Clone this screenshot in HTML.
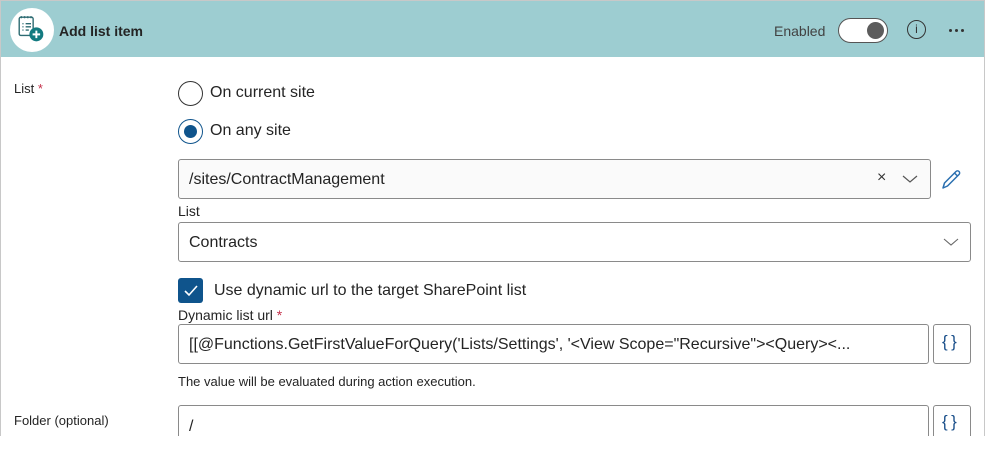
<!DOCTYPE html>
<html><head><style>
*{box-sizing:border-box;margin:0;padding:0}
body{width:987px;height:451px;background:#fff;font-family:"Liberation Sans",sans-serif;color:#242424;position:relative;overflow:hidden}
.card{position:absolute;left:0;top:0;width:985px;height:436px;border-left:1px solid #c8c8c8;border-right:1px solid #c8c8c8;border-top:1px solid #c8c8c8;overflow:hidden}
.hdr{position:absolute;left:0;top:0;width:100%;height:56px;background:#9dcdd1}
.abs{position:absolute}
.box{position:absolute;border:1px solid #8a8a8a;border-radius:3px;background:#fff}
.lbl{font-size:13px}
</style></head><body>
<div class="card">
<div class="hdr">
 <div class="abs" style="left:9px;top:7px;width:44px;height:44px;border-radius:50%;background:#fff"></div>
 <svg class="abs" style="left:15px;top:13px" width="30" height="30" viewBox="0 0 28 28">
  <rect x="3" y="3" width="13" height="17" rx="1.5" fill="none" stroke="#2d6b72" stroke-width="1.3"/>
  <path d="M5 2v2M8 2v2M11 2v2M14 2v2" stroke="#2d6b72" stroke-width="1.2"/>
  <path d="M6 9h1M9 9h5M6 12h1M9 12h5M6 15h1M9 15h3" stroke="#2d6b72" stroke-width="1.3"/>
  <circle cx="19" cy="19" r="6.5" fill="#137a80"/>
  <path d="M19 15.5v7M15.5 19h7" stroke="#fff" stroke-width="1.8"/>
 </svg>
 <div class="abs" style="left:58px;top:22px;font-size:14px;font-weight:bold;color:#242424">Add list item</div>
 <div class="abs" style="left:773px;top:22px;font-size:14px;color:#424242">Enabled</div>
 <div class="abs" style="left:837px;top:17px;width:50px;height:25px;border:1.5px solid #555;border-radius:13px;background:#fff"></div>
 <div class="abs" style="left:866px;top:21px;width:17px;height:17px;border-radius:50%;background:#5c5c5c"></div>
 <div class="abs" style="left:906px;top:19px;width:19px;height:19px;border:1.3px solid #333;border-radius:50%;font-size:12px;text-align:center;line-height:17px;color:#333">i</div>
 <div class="abs" style="left:948px;top:28px;width:3px;height:3px;border-radius:50%;background:#333"></div>
 <div class="abs" style="left:954px;top:28px;width:3px;height:3px;border-radius:50%;background:#333"></div>
 <div class="abs" style="left:960px;top:28px;width:3px;height:3px;border-radius:50%;background:#333"></div>
</div>
<div class="abs lbl" style="left:13px;top:80px">List <span style="color:#c4314b">*</span></div>
<div class="abs" style="left:177px;top:80px;width:25px;height:25px;border:1.3px solid #333;border-radius:50%"></div>
<div class="abs" style="left:209px;top:83px;font-size:16px">On current site</div>
<div class="abs" style="left:177px;top:118px;width:25px;height:25px;border:1.3px solid #0f548c;border-radius:50%"></div>
<div class="abs" style="left:183px;top:124px;width:13px;height:13px;background:#0f548c;border-radius:50%"></div>
<div class="abs" style="left:209px;top:121px;font-size:16px">On any site</div>
<div class="box" style="left:177px;top:158px;width:753px;height:40px;background:#fafafa"></div>
<div class="abs" style="left:188px;top:170px;font-size:16px">/sites/ContractManagement</div>
<div class="abs" style="left:876px;top:168px;font-size:16px;color:#333">×</div>
<svg class="abs" style="left:901px;top:173px" width="16" height="10"><path d="M1 2l7 6 7-6" fill="none" stroke="#555" stroke-width="1.2"/></svg>
<svg class="abs" style="left:939px;top:166px" width="24" height="24" viewBox="0 0 24 24"><path d="M3 21l1.5-5L16 4.5a2 2 0 0 1 3 3L7.5 19zM14.5 6l3 3" fill="none" stroke="#2a6fb0" stroke-width="1.5" stroke-linejoin="round"/></svg>
<div class="abs" style="left:177px;top:202px;font-size:14px">List</div>
<div class="box" style="left:177px;top:221px;width:793px;height:40px"></div>
<div class="abs" style="left:188px;top:233px;font-size:16px">Contracts</div>
<svg class="abs" style="left:942px;top:236px" width="16" height="10"><path d="M1 2l7 6 7-6" fill="none" stroke="#666" stroke-width="1.1"/></svg>
<div class="abs" style="left:177px;top:277px;width:25px;height:25px;background:#0f548c;border-radius:3px"></div>
<svg class="abs" style="left:181px;top:281px" width="17" height="17"><path d="M3 9l4 4 8-9" fill="none" stroke="#fff" stroke-width="1.6"/></svg>
<div class="abs" style="left:213px;top:281px;font-size:16px">Use dynamic url to the target SharePoint list</div>
<div class="abs" style="left:177px;top:306px;font-size:14px">Dynamic list url <span style="color:#c4314b">*</span></div>
<div class="box" style="left:177px;top:323px;width:751px;height:40px"></div>
<div class="abs" style="left:188px;top:335px;font-size:16px;white-space:nowrap">[[@Functions.GetFirstValueForQuery('Lists/Settings', '&lt;View Scope="Recursive"&gt;&lt;Query&gt;&lt;...</div>
<div class="box" style="left:932px;top:323px;width:38px;height:40px"></div>
<div class="abs" style="left:941px;top:331px;font-size:17px;color:#1a4f8a">{&thinsp;}</div>
<div class="abs" style="left:177px;top:373px;font-size:13px">The value will be evaluated during action execution.</div>
<div class="abs lbl" style="left:13px;top:412px">Folder (optional)</div>
<div class="box" style="left:177px;top:404px;width:751px;height:45px"></div>
<div class="abs" style="left:188px;top:417px;font-size:16px">/</div>
<div class="box" style="left:932px;top:404px;width:38px;height:45px"></div>
<div class="abs" style="left:941px;top:411px;font-size:17px;color:#1a4f8a">{&thinsp;}</div>
</div>
</body></html>
